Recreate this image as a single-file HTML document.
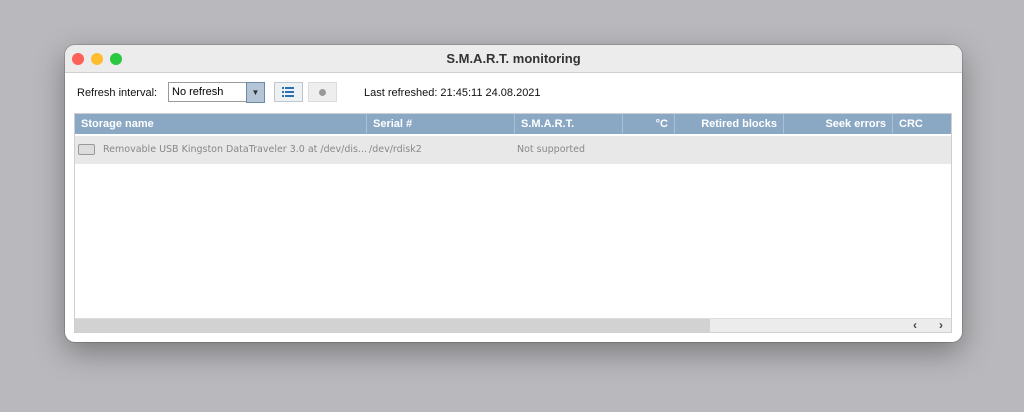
<!DOCTYPE html><html><head><style>
body{margin:0;width:1024px;height:412px;background:#b9b9bd;font-family:"Liberation Sans",sans-serif;position:relative;overflow:hidden}
.win{position:absolute;left:65px;top:45px;width:897px;height:297px;background:#fff;border-radius:10px;box-shadow:0 10px 30px rgba(0,0,0,.35),0 0 0 1px rgba(0,0,0,.15);overflow:hidden}
.tb{height:27px;background:#ececec;border-bottom:1px solid #d0d0d0;text-align:center;font-size:13px;font-weight:bold;line-height:27px;color:#333}
.dot{position:absolute;top:8px;width:12px;height:12px;border-radius:50%}
.a{position:absolute;font-size:11px;color:#111}
.hd{position:absolute;top:0;height:20px;line-height:20px;font-size:11px;font-weight:bold;color:#fff;border-right:1px solid #a9bfd3;box-sizing:border-box;padding:0 6px;white-space:nowrap;overflow:hidden}
.row span{position:absolute;white-space:nowrap;overflow:hidden}
</style></head><body>
<div class="win">
<div class="tb">S.M.A.R.T. monitoring</div>
<div class="dot" style="left:7px;background:#fe5f57"></div>
<div class="dot" style="left:26px;background:#febc2e"></div>
<div class="dot" style="left:45px;background:#28c840"></div>
<div class="a" style="left:12px;top:42px">Refresh interval:</div>
<div style="position:absolute;left:103px;top:37px;width:96px;height:20px;border:1px solid #9a9a9a;box-sizing:border-box;font-size:11px;line-height:18px;padding-left:3px">No refresh</div>
<div style="position:absolute;left:181px;top:37px;width:19px;height:21px;background:#b3c5d6;border:1px solid #6b8aa6;box-sizing:border-box;font-size:8px;text-align:center;line-height:19px;color:#333">▼</div>
<div style="position:absolute;left:209px;top:37px;width:29px;height:20px;background:#eef1f4;border:1px solid #bfc6cc;box-sizing:border-box">
<svg width="27" height="18"><g fill="#2a6fb0"><rect x="7" y="4" width="2" height="2"/><rect x="10" y="4" width="9" height="2"/><rect x="7" y="8" width="2" height="2"/><rect x="10" y="8" width="9" height="2"/><rect x="7" y="12" width="2" height="2"/><rect x="10" y="12" width="9" height="2"/></g></svg></div>
<div style="position:absolute;left:243px;top:37px;width:29px;height:20px;background:#eeeeee;border:1px solid #dcdcdc;box-sizing:border-box"><div style="width:7px;height:7px;border-radius:50%;background:#999;margin:6px auto"></div></div>
<div class="a" style="left:299px;top:42px">Last refreshed: 21:45:11 24.08.2021</div>
<div style="position:absolute;left:9px;top:68px;width:878px;height:220px;border:1px solid #cfcfcf;box-sizing:border-box;overflow:hidden;background:#fff">
<div style="position:absolute;left:0;top:0;width:878px;height:20px;background:#8aa8c3"></div>
<div class="hd" style="left:0;width:292px">Storage name</div>
<div class="hd" style="left:292px;width:148px">Serial #</div>
<div class="hd" style="left:440px;width:108px">S.M.A.R.T.</div>
<div class="hd" style="left:548px;width:52px;text-align:right">°C</div>
<div class="hd" style="left:600px;width:109px;text-align:right">Retired blocks</div>
<div class="hd" style="left:709px;width:109px;text-align:right">Seek errors</div>
<div class="hd" style="left:818px;width:80px;border:0">CRC</div>
<div class="row" style="position:absolute;left:0;top:22px;width:878px;height:28px;background:#e8e8e8;font-family:'DejaVu Sans',sans-serif;font-size:9.5px;color:#888;line-height:28px">
<div style="position:absolute;left:3px;top:8px;width:17px;height:11px;border:1px solid #999;border-radius:2px;background:#ddd;box-sizing:border-box"></div>
<span style="left:28px;width:264px">Removable USB Kingston DataTraveler 3.0 at /dev/dis...</span>
<span style="left:294px">/dev/rdisk2</span>
<span style="left:442px">Not supported</span></div>
<div style="position:absolute;left:0;top:204px;width:878px;height:15px;background:#ececec;border-top:1px solid #ddd"></div>
<div style="position:absolute;left:0;top:205px;width:635px;height:14px;background:#d2d2d2"></div>
<div style="position:absolute;left:838px;top:204px;font-size:12px;color:#444;font-weight:bold">‹</div>
<div style="position:absolute;left:864px;top:204px;font-size:12px;color:#444;font-weight:bold">›</div>
</div>
</div>
</body></html>
